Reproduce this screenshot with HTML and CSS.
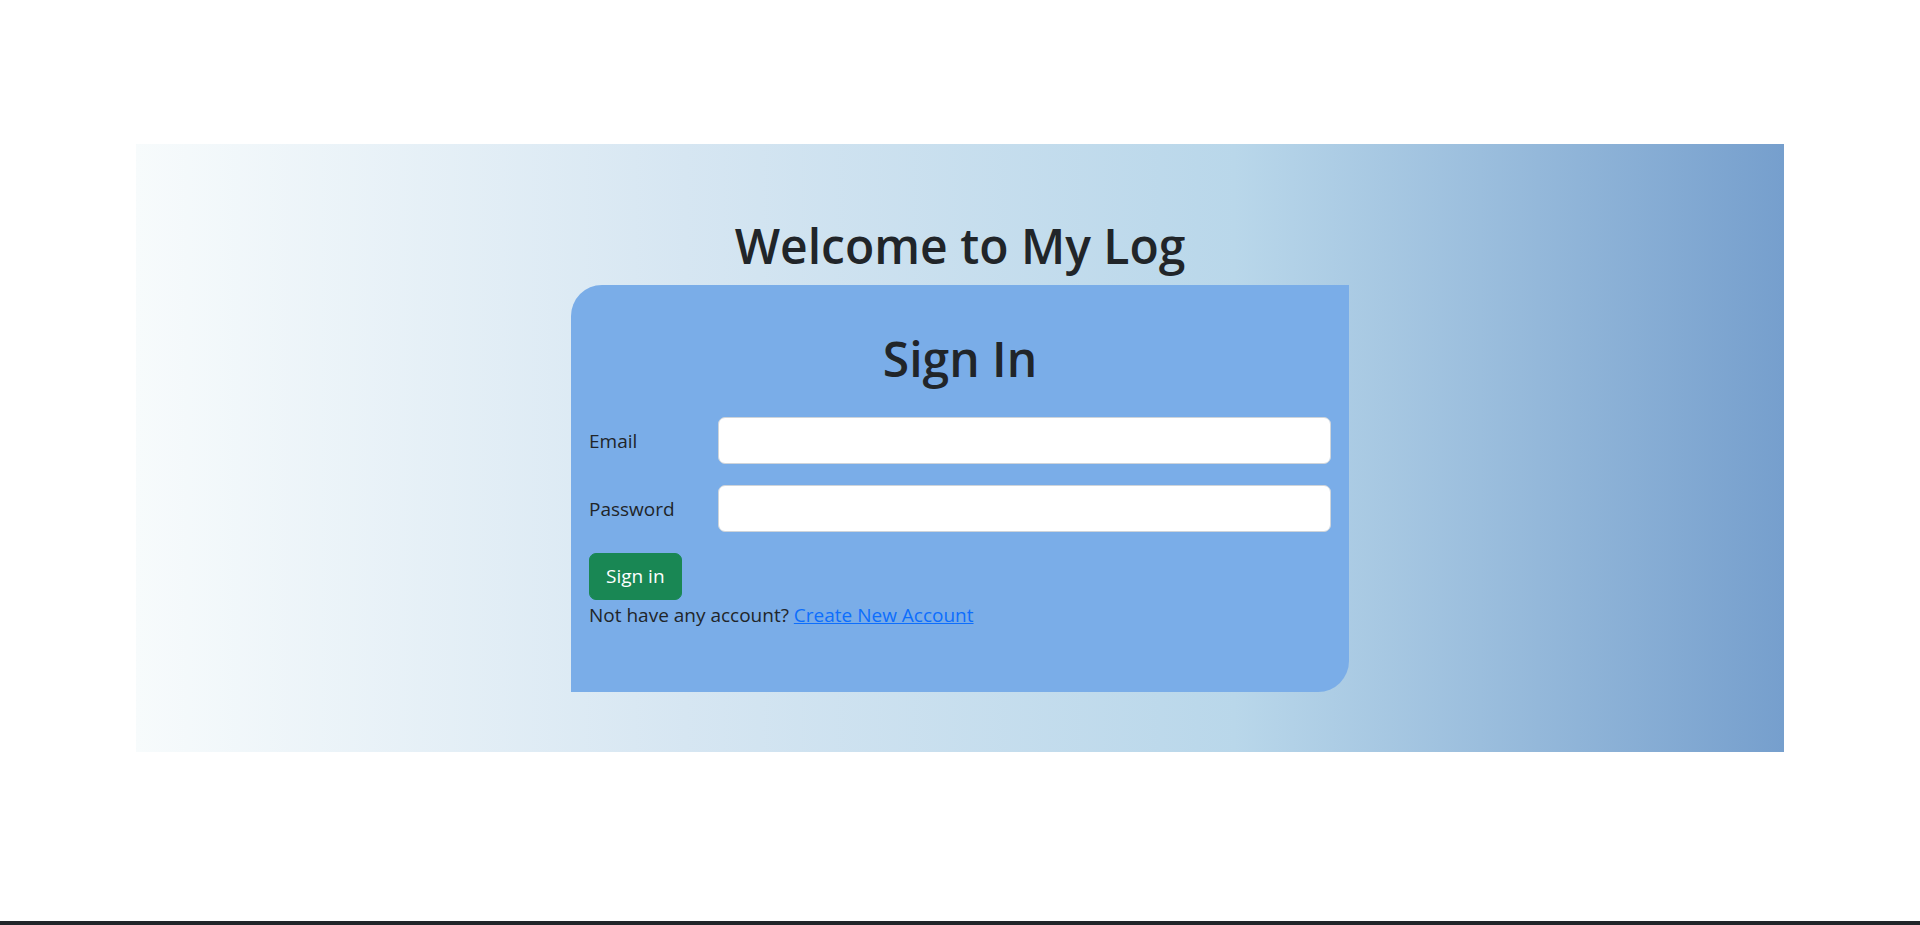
FILE: index.html
```html
<!DOCTYPE html>
<html lang="en">
<head>
  <meta charset="UTF-8" />
  <meta name="viewport" content="width=device-width, initial-scale=1.0" />
  <title>My Log - Sign In</title>
  <link rel="stylesheet" href="styles.css">
</head>
<body>
  <div class="hero">
    <h1 class="hero-title">Welcome to My Log</h1>

    <div class="login-card">
      <h1 class="card-title">Sign In</h1>
      <form onsubmit="return false;">
        <div class="form-row">
          <label for="email">Email</label>
          <input type="email" id="email" name="email">
        </div>
        <div class="form-row">
          <label for="password">Password</label>
          <input type="password" id="password" name="password">
        </div>
        <button type="submit" class="btn-signin">Sign in</button>
        <p class="signup-note">Not have any account? <a href="#">Create New Account</a></p>
      </form>
    </div>
  </div>

  <footer class="site-footer"></footer>
</body>
</html>
```

FILE: styles.css
```css
:root {
  --text: #212529;
  --card: #7aade8;
  --success: #198754;
  --link: #0d6efd;
  --border: #ced4da;
}

body {
  margin: 0;
  font-family: "Open Sans", "Noto Sans", sans-serif;
  font-size: 19px;
  line-height: 1.5;
  color: var(--text);
  background: #fff;
}

.hero {
  width: 1648px;
  margin: 144px auto 0;
  padding: 73px 0 60px;
  box-sizing: border-box;
  background: linear-gradient(to right, #f7fbfc, #d6e6f2, #b9d7ea, #769fcd);
}

.hero-title,
.card-title {
  margin: 0;
  font-size: 48px;
  font-weight: 600;
  line-height: 1.2;
  text-align: center;
}

.hero-title {
  margin-bottom: 10px;
}

.login-card {
  width: 778px;
  margin: 0 auto;
  padding: 45px 18px 42px;
  box-sizing: border-box;
  background: var(--card);
  border-radius: 31px 0 31px 0;
}

.card-title {
  margin-bottom: 30px;
}

.form-row {
  display: grid;
  grid-template-columns: 129px 1fr;
  align-items: center;
  margin-bottom: 21px;
}

.form-row label {
  line-height: 30px;
}

.form-row input {
  height: 47px;
  box-sizing: border-box;
  padding: 7px 15px;
  border: 1px solid var(--border);
  border-radius: 7px;
  background: #fff;
  font: inherit;
  outline: none;
}

.btn-signin {
  display: block;
  height: 47px;
  padding: 0 16px;
  border: 1px solid var(--success);
  border-radius: 7px;
  background: var(--success);
  color: #fff;
  font: inherit;
  cursor: pointer;
}

.signup-note {
  margin: 0 0 20px;
  line-height: 30px;
}

.signup-note a {
  color: var(--link);
}

.site-footer {
  margin-top: 169px;
  height: 60px;
  background: #212529;
}
```
